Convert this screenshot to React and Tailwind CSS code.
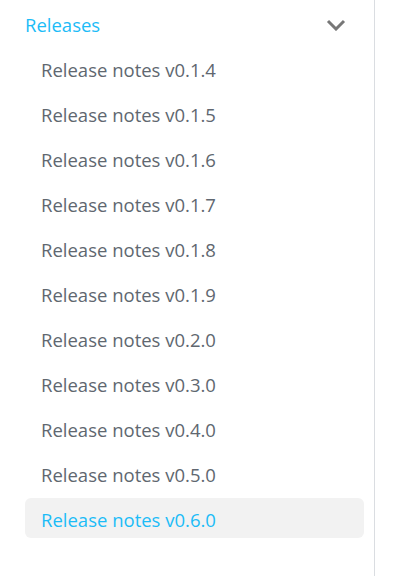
import { useState } from 'react';

const versions = [
  '0.1.4', '0.1.5', '0.1.6', '0.1.7', '0.1.8', '0.1.9',
  '0.2.0', '0.3.0', '0.4.0', '0.5.0', '0.6.0',
];

export default function App() {
  const [active, setActive] = useState('0.6.0');
  const [open, setOpen] = useState(true);

  return (
    <div
      className="h-screen w-[375px] border-r border-[#dadde1] bg-white"
      style={{ fontFamily: '"Open Sans", "Noto Sans", sans-serif' }}
    >
      <div className="pl-[25px] pr-[10px] pt-[4px]">
        <button
          onClick={() => setOpen(!open)}
          className="flex h-[40px] w-full items-center justify-between pr-[18px] pt-[2px] text-[18.5px] text-[#1cbcf7]"
        >
          <span>Releases</span>
          <svg width="20" height="12" viewBox="0 0 20 12" className={open ? '' : '-rotate-90'}>
            <path d="M2 2 L10 10 L18 2" fill="none" stroke="#777" strokeWidth="3" />
          </svg>
        </button>

        {open && (
          <ul className="-mt-[1px]">
            {versions.map((v) => (
              <li key={v} className="mt-[5px]">
                <a
                  href="#"
                  onClick={(e) => { e.preventDefault(); setActive(v); }}
                  className={`flex h-[40px] items-center rounded-md px-4 pt-[3px] text-[18.5px] ${
                    active === v ? 'bg-[#f2f2f2] text-[#1cbcf7]' : 'text-[#606770]'
                  }`}
                >
                  Release notes v{v}
                </a>
              </li>
            ))}
          </ul>
        )}
      </div>
    </div>
  );
}
